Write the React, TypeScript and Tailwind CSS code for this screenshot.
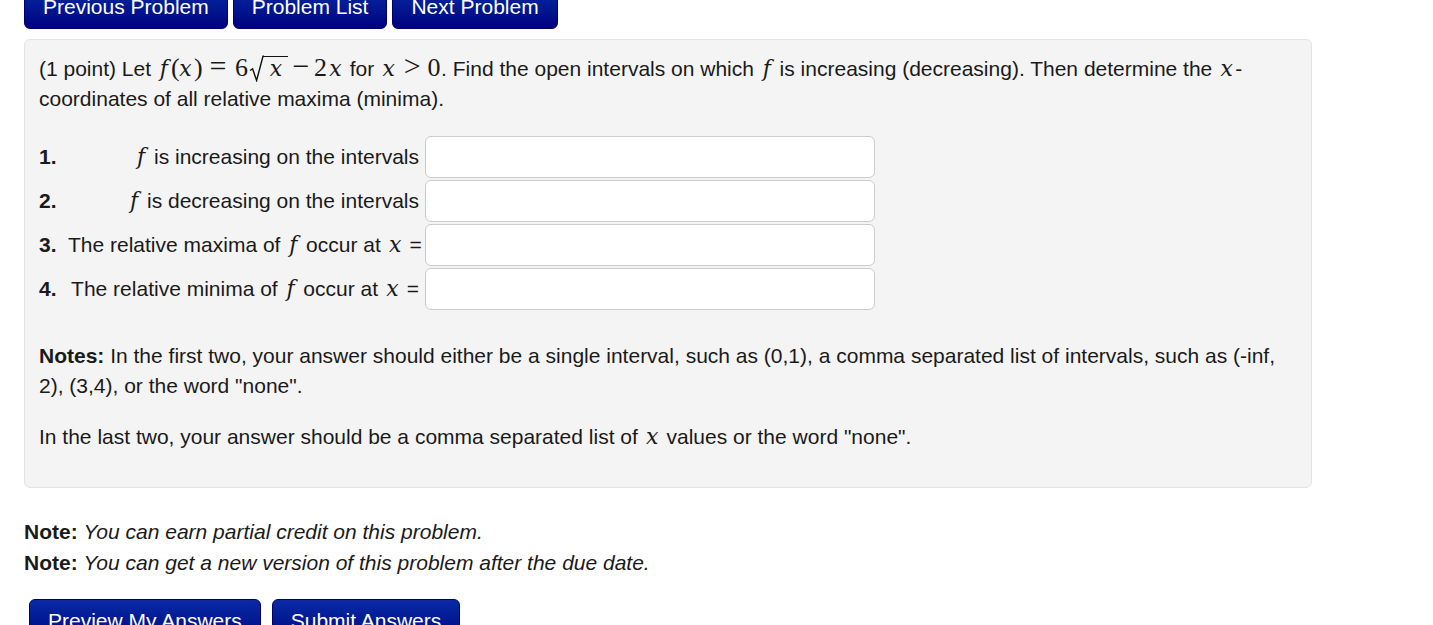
import React from "react";

const G = ({ w, c, children }: { w: string; c: string; children: React.ReactNode }) => (
  <span className={`inline-block text-center leading-[18px] ${w} ${c}`}>{children}</span>
);

const VAR = "font-['DejaVu_Serif'] italic text-[22px]";
const NUM = "font-['Liberation_Serif'] text-[26px]";
const OP = "font-['Liberation_Serif'] text-[30px]";

const F = () => <G w="w-[14px]" c={VAR}>f</G>;
const X = () => <G w="w-[17px]" c={VAR}>x</G>;

const Sqrt = () => (
  <span className="inline-flex items-start align-[-6px] h-[27px]">
    <svg width="15" height="27" viewBox="0 0 15 27" className="shrink-0">
      <path d="M1 15.5 L3.6 13.8 L7.6 25.5 L14 1.2 L15 1.2" stroke="#111" strokeWidth="1.4" fill="none" />
    </svg>
    <span className="border-t-[1.4px] border-[#111] w-[24px] text-center leading-[24px] mt-[0.5px] font-['DejaVu_Serif'] italic text-[22px]">x</span>
  </span>
);

const TopBtn = ({ label }: { label: string }) => (
  <button className="h-[44px] px-[18px] border border-[#000066] rounded-[6px] bg-gradient-to-b from-[#0a2aa6] to-[#00007f] text-white text-[21px] leading-[30px] font-['Liberation_Sans']">
    {label}
  </button>
);

const Row = ({ num, children }: { num: string; children: React.ReactNode }) => (
  <div className="flex items-center h-[44px]">
    <span className="w-[29px] font-bold">{num}</span>
    <span className="w-[351px] text-right whitespace-nowrap">{children}</span>
    <span className="w-[6px]" />
    <div className="w-[450px] h-[42px] bg-white border border-[#cccccc] rounded-[6px]" />
  </div>
);

export default function App() {
  return (
    <div className="min-h-[625px] bg-white font-['Liberation_Sans'] text-[21px] leading-[30px] text-[#1a1a1a]">
      <div className="flex gap-[5px] pl-[24px] -mt-[15px]">
        <TopBtn label="Previous Problem" />
        <TopBtn label="Problem List" />
        <TopBtn label="Next Problem" />
      </div>

      <div className="ml-[24px] mt-[10px] w-[1288px] bg-[#f4f4f4] border border-[#e3e3e3] rounded-[6px] px-[14px] pt-[14px] pb-[35px]">
        <p className="whitespace-nowrap">
          (1 point) Let <F />
          <G w="w-[6px]" c={NUM}>(</G>
          <X />
          <G w="w-[8px]" c={NUM}>)</G>
          <G w="w-[32px]" c={OP}>=</G>
          <G w="w-[15px]" c={NUM}>6</G>
          <Sqrt />
          <G w="w-[26px]" c={OP}>−</G>
          <G w="w-[13px]" c={NUM}>2</G>
          <X /> for <X />
          <G w="w-[30px]" c={OP}>&gt;</G>
          <G w="w-[14px]" c={NUM}>0</G>. Find the open intervals on which <F /> is increasing (decreasing). Then determine the <X />-
          <br />
          coordinates of all relative maxima (minima).
        </p>

        <div className="mt-[21px]">
          <Row num="1.">
            <F /> is increasing on the intervals
          </Row>
          <Row num="2.">
            <F /> is decreasing on the intervals
          </Row>
          <Row num="3.">
            The relative maxima of <F /> occur at <X /> =
          </Row>
          <Row num="4.">
            The relative minima of <F /> occur at <X /> =
          </Row>
        </div>

        <p className="mt-[30px]">
          <b>Notes:</b> In the first two, your answer should either be a single interval, such as (0,1), a comma separated list of intervals, such as (-inf,
          <br />
          2), (3,4), or the word "none".
        </p>
        <p className="mt-[21px]">
          In the last two, your answer should be a comma separated list of <X /> values or the word "none".
        </p>
      </div>

      <div className="ml-[24px] mt-[28px] leading-[31px]">
        <div>
          <b>Note:</b> <i>You can earn partial credit on this problem.</i>
        </div>
        <div>
          <b>Note:</b> <i>You can get a new version of this problem after the due date.</i>
        </div>
      </div>

      <div className="flex gap-[11px] ml-[29px] mt-[21px]">
        <TopBtn label="Preview My Answers" />
        <TopBtn label="Submit Answers" />
      </div>
    </div>
  );
}
